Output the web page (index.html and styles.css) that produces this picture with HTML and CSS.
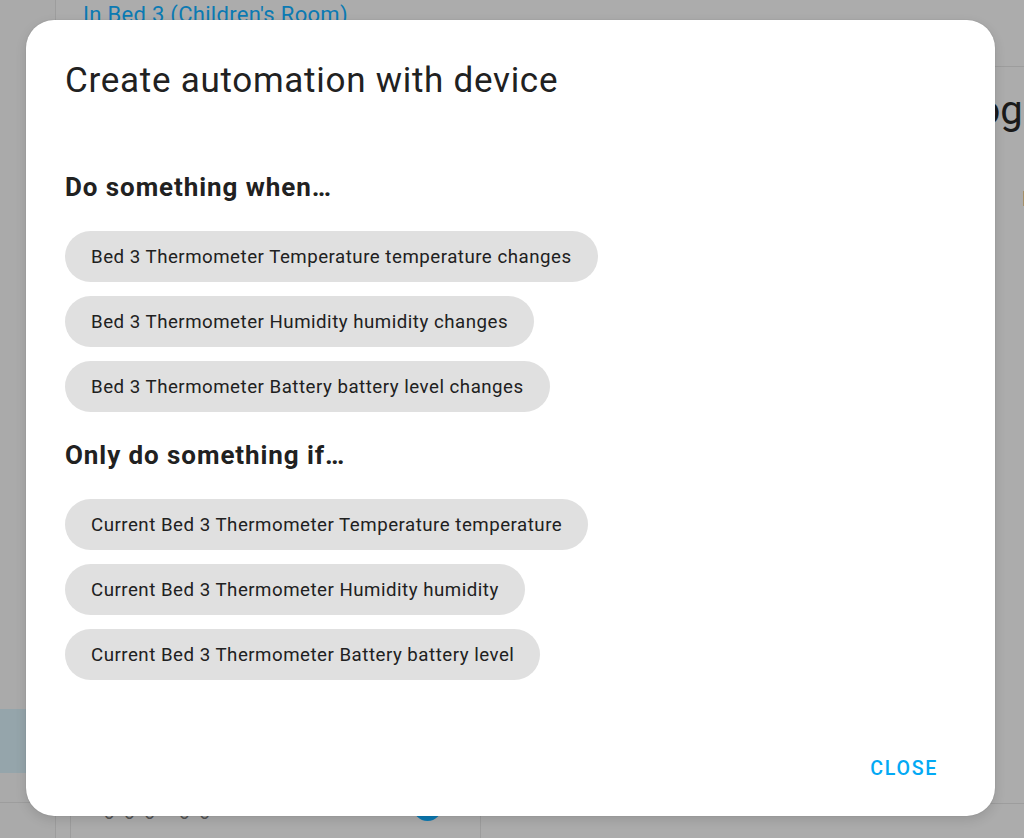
FILE: index.html
```html
<!DOCTYPE html>
<html lang="en">
<head>
<meta charset="utf-8">
<title>Create automation with device</title>
<link rel="stylesheet" href="styles.css">
</head>
<body>
<div class="page">
  <aside class="sidebar">
    <div class="band"></div>
    <div class="rule"></div>
  </aside>
  <main class="content">
    <a class="crumb" href="#">In Bed 3 (Children's Room)</a>
    <div class="upper">
      <div class="main-col"></div>
      <section class="logcard">
        <h2 class="logtitle">Logbook</h2>
        <div class="logline">I</div>
      </section>
    </div>
    <div class="lower">
      <div class="lower-gap"></div>
      <section class="entity-card">
        <span class="entity-dots">ooo oo</span>
        <span class="entity-toggle"></span>
      </section>
    </div>
  </main>
</div>

<div class="dialog" role="dialog" aria-labelledby="dlg-title">
  <h1 class="dialog-title" id="dlg-title">Create automation with device</h1>
  <div class="dialog-body">
    <h3 class="section-title">Do something when…</h3>
    <div class="chips">
      <button class="chip">Bed 3 Thermometer Temperature temperature changes</button>
      <button class="chip">Bed 3 Thermometer Humidity humidity changes</button>
      <button class="chip">Bed 3 Thermometer Battery battery level changes</button>
    </div>
    <h3 class="section-title">Only do something if…</h3>
    <div class="chips">
      <button class="chip">Current Bed 3 Thermometer Temperature temperature</button>
      <button class="chip">Current Bed 3 Thermometer Humidity humidity</button>
      <button class="chip">Current Bed 3 Thermometer Battery battery level</button>
    </div>
  </div>
  <div class="dialog-actions">
    <button class="text-button">Close</button>
  </div>
</div>
</body>
</html>
```
FILE: styles.css
```css
* { box-sizing: border-box; }
html, body { margin: 0; padding: 0; }
body {
  width: 1024px;
  height: 838px;
  overflow: hidden;
  background: #acacac;
  font-family: Roboto, "Noto Sans", sans-serif;
  position: relative;
}

/* ---------- background page (under scrim) ---------- */
.page {
  display: flex;
  height: 838px;
}
.sidebar {
  width: 56px;
  flex: none;
  border-right: 1px solid #9d9d9d;
  display: flex;
  flex-direction: column;
  background: #aaaaaa;
}
.band {
  margin-top: 709px;
  height: 64px;
  background: #95a5ab;
}
.rule {
  margin-top: 29px;
  border-top: 1px solid #9d9d9d;
}
.content {
  flex: 1;
  display: flex;
  flex-direction: column;
  min-width: 0;
}
.crumb {
  display: block;
  height: 30px;
  padding-left: 27px;
  font-size: 22px;
  letter-spacing: 0.3px;
  line-height: 30px;
  color: #0b7ab3;
  text-decoration: none;
  white-space: nowrap;
}
.upper {
  display: flex;
  height: 773px;
}
.main-col { flex: 1; }
.logcard {
  width: 58px;
  margin-top: 36px;
  border-top: 1px solid #9d9d9d;
  overflow: hidden;
}
.logtitle {
  margin: 20px 0 0 -10px;
  font-size: 40px;
  font-weight: 400;
  line-height: 48px;
  color: #1a1a1a;
  white-space: nowrap;
}
.logline {
  margin: 52px 0 0 56px;
  font-size: 20px;
  line-height: 24px;
  color: #3a3a3a;
}
.lower {
  display: flex;
  flex: 1;
  border-top: 1px solid #9d9d9d;
}
.lower-gap { width: 14px; flex: none; }
.entity-card {
  width: 411px;
  border-left: 1px solid #9d9d9d;
  border-right: 1px solid #9d9d9d;
  display: flex;
  align-items: flex-start;
  justify-content: space-between;
  padding: 0 38px 0 33px;
}
.entity-dots {
  margin-top: -2px;
  color: #555;
  font-size: 18px;
  line-height: 21px;
  letter-spacing: 10px;
}
.entity-toggle {
  width: 29px;
  height: 29px;
  border-radius: 50%;
  background: #0b7ab3;
  margin-top: -12px;
}

/* ---------- dialog ---------- */
.dialog {
  position: absolute;
  left: 26px;
  top: 20px;
  width: 969px;
  height: 796px;
  background: #ffffff;
  border-radius: 28px;
  box-shadow: 0 0 1px rgba(0,0,0,0.25), 0 4px 12px rgba(0,0,0,0.12);
  display: flex;
  flex-direction: column;
  padding: 0 39px;
}
.dialog-title {
  margin: 0;
  padding-top: 41px;
  font-size: 35px;
  font-weight: 400;
  letter-spacing: 0.72px;
  line-height: 40px;
  color: #212121;
}
.dialog-body {
  flex: 1;
  padding-top: 70px;
}
.section-title {
  margin: 0 0 28px;
  font-size: 26px;
  font-weight: 700;
  line-height: 32px;
  color: #212121;
  letter-spacing: 0.92px;
}
.chips {
  display: flex;
  flex-direction: column;
  align-items: flex-start;
  gap: 14px;
  margin-bottom: 27px;
}
.chip {
  height: 51px;
  border: none;
  border-radius: 26px;
  background: #e0e0e0;
  padding: 0 26px;
  font-family: Roboto, "Noto Sans", sans-serif;
  font-size: 18.7px;
  letter-spacing: 0.5px;
  color: #212121;
  cursor: pointer;
}
.dialog-actions {
  display: flex;
  justify-content: flex-end;
  padding: 0 18px 35px 0;
}
.text-button {
  border: none;
  background: none;
  padding: 0;
  font-family: Roboto, "Noto Sans", sans-serif;
  font-size: 19.6px;
  font-weight: 500;
  letter-spacing: 1.7px;
  text-transform: uppercase;
  color: #03a9f4;
  line-height: 24px;
}
```
